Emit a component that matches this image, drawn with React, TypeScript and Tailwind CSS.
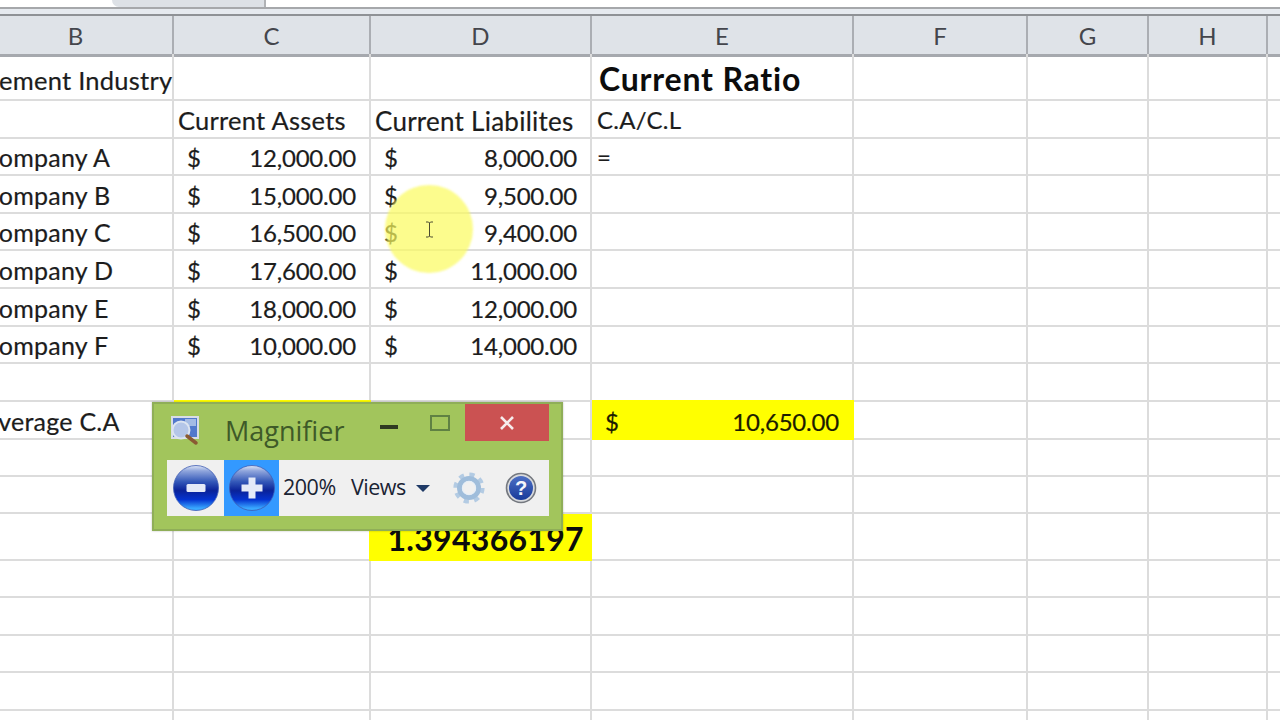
import React from 'react';

const COLS = 'grid grid-cols-[195px_197px_221px_262px_174px_121px_119px_35px] w-[1324px]';
const CELL = 'border-r-2 border-b-2 border-[#dcdcdc] flex items-end min-w-0 whitespace-nowrap overflow-visible';
const LABEL = 'leading-[30px] tracking-[0.25px] [-webkit-text-stroke:0.2px]';
const BIG = 'pb-[2px] text-[32px] leading-[36px] font-bold text-[#0c0c0c]';

const Money = ({ value, yellow }: { value: string; yellow?: boolean }) => (
  <div className={`flex w-full justify-between pl-[13px] pr-[13px] pb-[1px] text-[24px] leading-[30px] [-webkit-text-stroke:0.2px] ${yellow ? 'text-[#1c1c00]' : ''}`}>
    <span>$</span>
    <span className="tracking-[-0.2px]">{value}</span>
  </div>
);

const rows: { h: string; b?: string; c?: string; d?: string; e?: string }[] = [
  { h: 'h-[38px]', c: 'Current Assets', d: 'Current Liabilites', e: 'C.A/C.L' },
  { h: 'h-[37px]', b: 'Company A', c: '12,000.00', d: '8,000.00', e: '=' },
  { h: 'h-[38px]', b: 'Company B', c: '15,000.00', d: '9,500.00' },
  { h: 'h-[37px]', b: 'Company C', c: '16,500.00', d: '9,400.00' },
  { h: 'h-[38px]', b: 'Company D', c: '17,600.00', d: '11,000.00' },
  { h: 'h-[38px]', b: 'Company E', c: '18,000.00', d: '12,000.00' },
  { h: 'h-[37px]', b: 'Company F', c: '10,000.00', d: '14,000.00' },
  { h: 'h-[38px]' },
];

const emptyRows = ['h-[37px]', 'h-[38px]', 'h-[37px]', 'h-[38px]', 'h-[37px]'];

const Row = ({ h, b, c, d, e }: { h: string; b?: string; c?: string; d?: string; e?: string }) => {
  const isMoney = (s?: string) => !!s && /^\d/.test(s);
  const text = (s: string | undefined, cls: string) =>
    s ? (isMoney(s) ? <Money value={s} /> : <span className={`${cls} ${LABEL}`}>{s}</span>) : null;
  return (
    <div className={`${COLS} ${h}`}>
      <div className={CELL}>{text(b, 'pl-[3px] pb-[2px] text-[25px]')}</div>
      <div className={CELL}>{text(c, 'pl-[4px] pb-[2px] text-[25.5px]')}</div>
      <div className={CELL}>{text(d, 'pl-[4px] pb-[1px] text-[26px]')}</div>
      <div className={CELL}>{text(e, 'pl-[5px] pb-[2px] text-[24px]')}</div>
      <div className={CELL} />
      <div className={CELL} />
      <div className={CELL} />
      <div className={CELL} />
    </div>
  );
};

const Orb = ({ id, plus }: { id: string; plus?: boolean }) => (
  <svg width="48" height="48" viewBox="0 0 48 48">
    <defs>
      <linearGradient id={id} x1="0" y1="0" x2="0" y2="1">
        <stop offset="0" stopColor="#dfe6f5" />
        <stop offset="0.12" stopColor="#8fa5dc" />
        <stop offset="0.36" stopColor="#3358b8" />
        <stop offset="0.56" stopColor="#0a2299" />
        <stop offset="0.76" stopColor="#0433d0" />
        <stop offset="0.95" stopColor="#39a8ff" />
      </linearGradient>
    </defs>
    <circle cx="24" cy="24" r="22.5" fill={`url(#${id})`} stroke="#3d5cb4" strokeWidth="0.8" />
    {plus ? (
      <path d="M20.5 13.5h7v7h7v7h-7v7h-7v-7h-7v-7h7z" fill="#e4eaf8" />
    ) : (
      <rect x="14.5" y="20" width="19" height="8" rx="1.5" fill="#e4eaf8" />
    )}
  </svg>
);

const Gear = () => (
  <svg width="32" height="32" viewBox="0 0 32 32">
    <circle cx="16" cy="16" r="13.6" fill="none" stroke="#b3cbe3" strokeWidth="4" strokeDasharray="5.2 5.48" />
    <circle cx="16" cy="16" r="9.5" fill="none" stroke="#9fbddb" strokeWidth="5" />
    <circle cx="16" cy="16" r="6.6" fill="none" stroke="#e6eef6" strokeWidth="1.2" />
  </svg>
);

const Help = () => (
  <svg width="32" height="32" viewBox="0 0 32 32">
    <defs>
      <linearGradient id="helpfill" x1="0" y1="0" x2="0" y2="1">
        <stop offset="0" stopColor="#4c6fc4" />
        <stop offset="1" stopColor="#183a9a" />
      </linearGradient>
    </defs>
    <circle cx="16" cy="16" r="14.5" fill="#d9dbde" stroke="#74787f" strokeWidth="1.6" />
    <circle cx="16" cy="16" r="12" fill="url(#helpfill)" />
    <text x="16" y="23" textAnchor="middle" fontSize="20" fontWeight="700" fill="#f4f6fb" fontFamily="'Liberation Sans', sans-serif">?</text>
  </svg>
);

const MagnifierIcon = () => (
  <svg width="30" height="31" viewBox="0 0 30 31">
    <rect x="1" y="1" width="28" height="23" fill="#d8dde6" />
    <rect x="3" y="3" width="24" height="19" fill="#5279cc" />
    <rect x="15" y="4" width="11" height="7" fill="#a4bbe4" />
    <circle cx="11" cy="15" r="8.5" fill="#b4c6e8" stroke="#dce4f0" strokeWidth="2" />
    <path d="M17 21l9 7" stroke="#8a5a33" strokeWidth="3.5" strokeLinecap="round" />
  </svg>
);

const Magnifier = () => (
  <div className="absolute left-[152px] top-[402px] w-[411px] h-[129px] bg-[#a2c55c] border-2 border-[#8fae58] flex flex-col shadow-[0_0_2px_rgba(0,0,0,0.25)]">
    <div className="h-[56px] flex items-start">
      <div className="ml-[16px] mt-[11px]"><MagnifierIcon /></div>
      <span className="ml-[25px] mt-[8px] w-[120px] text-[27px] leading-[38px] text-[#3e5a28] font-['Open_Sans',sans-serif]">Magnifier</span>
      <div className="ml-[35px] mt-[21px] w-[18px] h-[4px] bg-[#2f3a22]" />
      <div className="ml-[32px] mt-[11px] w-[20px] h-[16px] border-2 border-[#5f8143]" />
      <div className="ml-[15px] mt-[0px] w-[84px] h-[37px] bg-[#cb5252] flex items-center justify-center">
        <svg width="16" height="16" viewBox="0 0 16 16">
          <path d="M2 2l12 12M14 2L2 14" stroke="#f6ecec" strokeWidth="2.6" />
        </svg>
      </div>
    </div>
    <div className="ml-[13px] w-[382px] h-[56px] bg-[#f0f0f0] flex items-center text-[#1a2333] font-['Open_Sans',sans-serif]">
      <div className="w-[57px] h-full flex items-center justify-center"><Orb id="orb1" /></div>
      <div className="w-[55px] h-full bg-[#3399ff] flex items-center justify-center"><Orb id="orb2" plus /></div>
      <span className="ml-[4px] pb-[2px] w-[68px] text-[21.5px] leading-none tracking-[-0.5px]">200%</span>
      <span className="pb-[2px] w-[56px] text-[21.5px] leading-none tracking-[-0.5px]">Views</span>
      <div className="ml-[9px] w-0 h-0 border-x-[7px] border-x-transparent border-t-[7px] border-t-[#1f3a66]" />
      <div className="ml-[23px]"><Gear /></div>
      <div className="ml-[20px]"><Help /></div>
    </div>
  </div>
);

export default function App() {
  return (
    <div className="relative w-[1280px] h-[720px] overflow-hidden bg-white text-[#1c1c1c] font-['Lato','Liberation_Sans',sans-serif]">
      <div className="h-[9px] border-b-2 border-[#a6a8ab] flex">
        <div className="ml-[112px] w-[154px] h-[7px] bg-[#dde1e6] border-r-2 border-[#b0b2b5] rounded-bl-[12px]" />
      </div>
      <div className="h-[7px] bg-[#e6eaef] border-b-2 border-[#8f9296]" />
      <div className="-ml-[21px]">
        <div className={`${COLS} h-[38px] bg-[#dfe3e8] text-[#44464c] text-[24px]`}>
          {['B', 'C', 'D', 'E', 'F', 'G', 'H', ''].map((l, i) => (
            <div key={i} className="pt-[2px] border-r-2 border-b-[3px] border-r-[#abaeb3] border-b-[#a6a9ae] flex items-center justify-center">{l}</div>
          ))}
        </div>

        <div className={`${COLS} h-[47px]`}>
          <div className={CELL}><span className={`pl-[3px] pb-[4px] text-[25.5px] ${LABEL}`}>Cement Industry</span></div>
          <div className={CELL} />
          <div className={CELL} />
          <div className={CELL}><span className={`pl-[7px] tracking-[0.8px] ${BIG}`}>Current Ratio</span></div>
          <div className={CELL} /><div className={CELL} /><div className={CELL} /><div className={CELL} />
        </div>
        {rows.map((r, i) => <Row key={i} {...r} />)}

        <div className={`${COLS} h-[38px]`}>
          <div className={CELL}><span className={`pl-[3px] pb-[2px] text-[25px] ${LABEL}`}>Average C.A</span></div>
          <div className={`${CELL} bg-[#ffff00] border-[#ffff00] shadow-[0_-2px_0_#ffff00]`} />
          <div className={CELL} />
          <div className={`${CELL} bg-[#ffff00] border-[#ffff00] shadow-[0_-2px_0_#ffff00]`}><Money value="10,650.00" yellow /></div>
          <div className={CELL} /><div className={CELL} /><div className={CELL} /><div className={CELL} />
        </div>
        <Row h="h-[37px]" />
        <Row h="h-[37px]" />
        <div className={`${COLS} h-[47px]`}>
          <div className={CELL} />
          <div className={CELL} />
          <div className={`${CELL} bg-[#ffff00] border-[#ffff00] justify-end shadow-[-2px_0_0_#ffff00]`}>
            <span className={`pr-[6px] tracking-[0.3px] ${BIG}`}>1.394366197</span>
          </div>
          <div className={CELL} /><div className={CELL} /><div className={CELL} /><div className={CELL} /><div className={CELL} />
        </div>
        {emptyRows.map((h, i) => <Row key={i} h={h} />)}
      </div>

      <div className="absolute left-[385px] top-[185px] w-[88px] h-[88px] rounded-full bg-[#fbfb5c]/70 blur-[1px]" />
      <svg className="absolute left-[425px] top-[221px]" width="9" height="17" viewBox="0 0 9 17">
        <path d="M1 1h2.5l1 1 1-1H8M4.5 2v13M1 16h2.5l1-1 1 1H8" fill="none" stroke="#4a4a30" strokeWidth="1" />
      </svg>

      <Magnifier />
    </div>
  );
}
